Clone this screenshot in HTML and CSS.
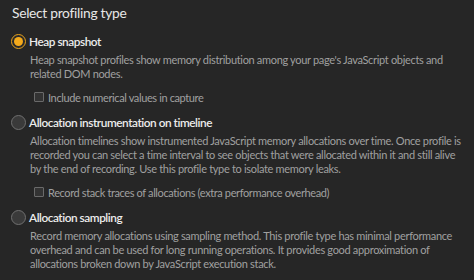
FILE: index.html
```html
<!DOCTYPE html>
<html>
<head>
<meta charset="utf-8">
<link rel="stylesheet" href="styles.css">
</head>
<body>
<div class="panel">
  <div class="title">Select profiling type</div>

  <div class="option">
    <div class="option-head">
      <span class="radio checked"><span class="dot"></span></span>
      <span class="label">Heap snapshot</span>
    </div>
    <div class="desc">Heap snapshot profiles show memory distribution among your page's JavaScript objects and<br>related DOM nodes.</div>
    <div class="check-row">
      <span class="checkbox"></span>
      <span class="check-label">Include numerical values in capture</span>
    </div>
  </div>

  <div class="option">
    <div class="option-head">
      <span class="radio"></span>
      <span class="label">Allocation instrumentation on timeline</span>
    </div>
    <div class="desc">Allocation timelines show instrumented JavaScript memory allocations over time. Once profile is<br>recorded you can select a time interval to see objects that were allocated within it and still alive<br>by the end of recording. Use this profile type to isolate memory leaks.</div>
    <div class="check-row">
      <span class="checkbox"></span>
      <span class="check-label">Record stack traces of allocations (extra performance overhead)</span>
    </div>
  </div>

  <div class="option">
    <div class="option-head">
      <span class="radio"></span>
      <span class="label">Allocation sampling</span>
    </div>
    <div class="desc">Record memory allocations using sampling method. This profile type has minimal performance<br>overhead and can be used for long running operations. It provides good approximation of<br>allocations broken down by JavaScript execution stack.</div>
  </div>
</div>
</body>
</html>
```
FILE: styles.css
```css
html, body {
  margin: 0;
  padding: 0;
  background: #262626;
}
.panel {
  font-family: Lato, "Open Sans", sans-serif;
  color: #e3e3e3;
  padding: 3px 0 0 12px;
  width: 462px;
}
.title {
  font-size: 13.8px;
  line-height: 20px;
  letter-spacing: -0.3px;
  color: #e6e6e6;
  margin-bottom: 8px;
}
.option {
  margin-bottom: 8px;
}
.option-head {
  display: flex;
  align-items: center;
  height: 20px;
}
.radio {
  box-sizing: border-box;
  width: 15px;
  height: 15px;
  border-radius: 50%;
  border: 1.5px solid #707070;
  background: #3a3a3a;
  display: flex;
  align-items: center;
  justify-content: center;
  margin-right: 3px;
  margin-left: -1px;
}
.radio.checked {
  border: 1.5px solid #e8a21c;
  background: #2a2a2a;
}
.radio .dot {
  width: 9px;
  height: 9px;
  border-radius: 50%;
  background: #f4aa1c;
}
.label {
  font-size: 11.8px;
  font-weight: 600;
  letter-spacing: -0.45px;
  color: #ececec;
}
.desc {
  margin-top: 2px;
  margin-left: 18px;
  font-size: 11px;
  line-height: 14px;
  letter-spacing: -0.32px;
  white-space: nowrap;
  color: #a0a0a0;
}
.check-row {
  display: flex;
  align-items: center;
  height: 14px;
  margin-top: 9px;
  margin-left: 22px;
}
.checkbox {
  box-sizing: border-box;
  width: 10px;
  height: 10px;
  border: 1px solid #6a6a6a;
  background: #333;
  border-radius: 1px;
  margin-right: 4px;
}
.check-label {
  font-size: 11px;
  letter-spacing: -0.38px;
  white-space: nowrap;
  color: #a0a0a0;
}
```
